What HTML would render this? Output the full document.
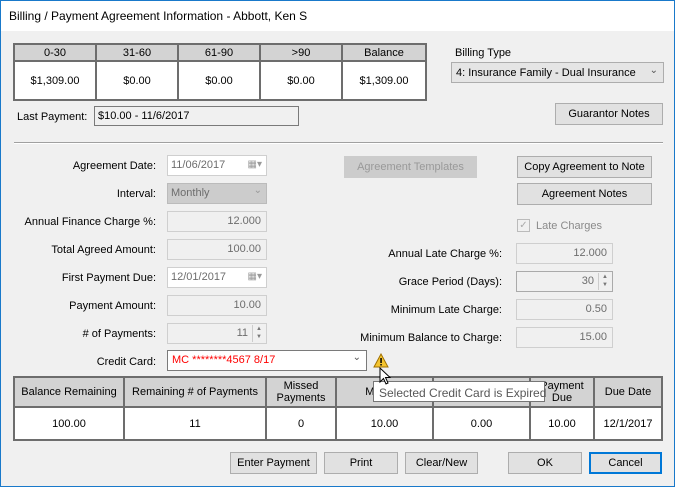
<!DOCTYPE html><html><head><style>
*{box-sizing:border-box}
body{margin:0;width:675px;height:487px;overflow:hidden;font-family:"Liberation Sans",sans-serif;font-size:11px;color:#000;white-space:nowrap}
#w{position:absolute;left:0;top:0;width:675px;height:487px;border:1px solid #1979ca;background:#f0f0f0}
.a{position:absolute}
#tb{left:0;top:0;width:673px;height:30px;background:#fff;font-size:12px;padding:8px 0 0 8px}
table{border-collapse:collapse;position:absolute;background:#fff}
td{border:2px solid #6d6d6d;text-align:center;padding:0}
th{border:2px solid #6d6d6d;background:#d3d3d3;font-weight:normal;padding:0;line-height:12px}
.lbl{position:absolute;text-align:right;width:160px}
.in{position:absolute;border:1px solid #cfcfcf;background:#f0f0f0;color:#6d6d6d;text-align:right;padding:3px 5px 0 0;height:21px}
.btn{position:absolute;border:1px solid #adadad;background:#e1e1e1;text-align:center;height:22px;padding-top:4px}
.sp{position:absolute;right:1px;top:1px;width:13px;height:17px;border-left:1px solid #ccc;font-size:6px;color:#777;text-align:center;line-height:8px}
.cal{position:absolute;right:4px;top:3px;color:#999;font-size:10px}
</style></head><body><div id="w">
<div class="a" id="tb">Billing / Payment Agreement Information - Abbott, Ken S</div>
<table style="left:12px;top:42px;width:414px">
<tr style="height:17px"><th style="width:82px">0-30</th><th style="width:82px">31-60</th><th style="width:82px">61-90</th><th style="width:82px">&gt;90</th><th>Balance</th></tr>
<tr style="height:39px"><td>$1,309.00</td><td>$0.00</td><td>$0.00</td><td>$0.00</td><td>$1,309.00</td></tr></table>
<div class="a" style="left:454px;top:46px">Billing Type</div>
<div class="a" style="left:450px;top:61px;width:213px;height:21px;border:1px solid #adadad;background:#e5e5e5;padding:4px 0 0 4px">4: Insurance Family - Dual Insurance<span style="position:absolute;right:5px;top:2px;font-size:10px;color:#555">&#8964;</span></div>
<div class="a" style="left:16px;top:110px">Last Payment:</div>
<div class="a" style="left:93px;top:105px;width:205px;height:20px;border:1px solid #7a7a7a;background:#f0f0f0;padding:3px 0 0 3px">$10.00 - 11/6/2017</div>
<div class="btn" style="left:554px;top:102px;width:108px">Guarantor Notes</div>
<div class="a" style="left:13px;top:141px;width:649px;height:2px;border-top:1px solid #a0a0a0;border-bottom:1px solid #fff"></div>
<div class="lbl" style="left:-5px;top:159px">Agreement Date:</div>
<div class="lbl" style="left:-5px;top:187px">Interval:</div>
<div class="lbl" style="left:-5px;top:215px">Annual Finance Charge %:</div>
<div class="lbl" style="left:-5px;top:243px">Total Agreed Amount:</div>
<div class="lbl" style="left:-5px;top:271px">First Payment Due:</div>
<div class="lbl" style="left:-5px;top:299px">Payment Amount:</div>
<div class="lbl" style="left:-5px;top:327px"># of Payments:</div>
<div class="lbl" style="left:-5px;top:355px">Credit Card:</div>
<div class="in" style="left:166px;top:154px;width:100px;background:#fff;text-align:left;padding-left:3px">11/06/2017<span class="cal">&#9638;&#9662;</span></div>
<div class="in" style="left:166px;top:182px;width:100px;background:#ccc;text-align:left;padding-left:3px;border-color:#bbb">Monthly<span class="cal" style="top:1px">&#8964;</span></div>
<div class="in" style="left:166px;top:210px;width:100px">12.000</div>
<div class="in" style="left:166px;top:238px;width:100px">100.00</div>
<div class="in" style="left:166px;top:266px;width:100px;background:#fff;text-align:left;padding-left:3px">12/01/2017<span class="cal">&#9638;&#9662;</span></div>
<div class="in" style="left:166px;top:294px;width:100px">10.00</div>
<div class="in" style="left:166px;top:322px;width:100px;padding-right:18px">11<div class="sp">&#9650;<br>&#9660;</div></div>
<div class="a" style="left:166px;top:349px;width:200px;height:21px;border:1px solid #7a7a7a;background:#fff;color:#f00;padding:3px 0 0 4px">MC ********4567 8/17<span style="position:absolute;right:5px;top:1px;color:#555;font-size:10px">&#8964;</span></div>
<div class="btn" style="left:343px;top:155px;width:133px;border-color:#ccc;background:#ccc;color:#999">Agreement Templates</div>
<div class="btn" style="left:516px;top:155px;width:135px">Copy Agreement to Note</div>
<div class="btn" style="left:516px;top:182px;width:135px">Agreement Notes</div>
<div class="a" style="left:516px;top:218px;width:13px;height:13px;border:1px solid #bbb;color:#aaa;font-size:10px;line-height:11px;text-align:center">&#10003;</div>
<div class="a" style="left:535px;top:219px;color:#8a8a8a">Late Charges</div>
<div class="lbl" style="left:341px;top:247px">Annual Late Charge %:</div>
<div class="lbl" style="left:341px;top:275px">Grace Period (Days):</div>
<div class="lbl" style="left:341px;top:303px">Minimum Late Charge:</div>
<div class="lbl" style="left:341px;top:331px">Minimum Balance to Charge:</div>
<div class="in" style="left:515px;top:242px;width:97px">12.000</div>
<div class="in" style="left:515px;top:270px;width:97px;padding-right:18px;border-color:#aaa">30<div class="sp">&#9650;<br>&#9660;</div></div>
<div class="in" style="left:515px;top:298px;width:97px">0.50</div>
<div class="in" style="left:515px;top:326px;width:97px">15.00</div>
<svg class="a" style="left:372px;top:352px" width="16" height="16"><path d="M8 1 L15 14 L1 14 Z" fill="#f4c430" stroke="#a07000"/><rect x="7.3" y="5" width="1.5" height="5" fill="#000"/><rect x="7.3" y="11" width="1.5" height="1.5" fill="#000"/></svg>
<table style="left:12px;top:375px;width:650px">
<tr style="height:30px"><th style="width:110px">Balance Remaining</th><th style="width:142px">Remaining # of Payments</th><th style="width:70px">Missed<br>Payments</th><th style="width:97px">Monthly</th><th style="width:97px"></th><th style="width:64px">Payment<br>Due</th><th>Due Date</th></tr>
<tr style="height:33px"><td>100.00</td><td>11</td><td>0</td><td>10.00</td><td>0.00</td><td>10.00</td><td>12/1/2017</td></tr></table>
<div class="a" style="left:372px;top:380px;width:172px;height:21px;border:1px solid #767676;background:#fff;color:#575757;padding:4px 0 0 5px;font-size:12px">Selected Credit Card is Expired</div>
<svg class="a" style="left:378px;top:366px" width="14" height="20"><path d="M1 1 L1 15 L4.5 11.5 L7 17 L9 16 L6.5 10.5 L11 10.5 Z" fill="#fff" stroke="#000"/></svg>
<div class="btn" style="left:229px;top:451px;width:87px">Enter Payment</div>
<div class="btn" style="left:323px;top:451px;width:74px">Print</div>
<div class="btn" style="left:404px;top:451px;width:73px">Clear/New</div>
<div class="btn" style="left:507px;top:451px;width:74px">OK</div>
<div class="btn" style="left:588px;top:451px;width:73px;border:2px solid #0078d7;padding-top:3px">Cancel</div>
</div></body></html>
